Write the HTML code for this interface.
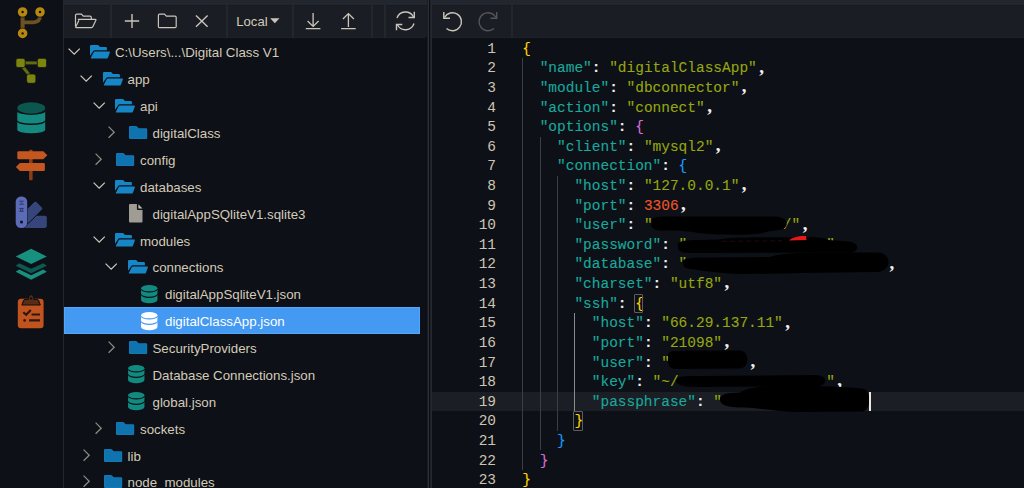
<!DOCTYPE html>
<html><head><meta charset="utf-8">
<style>
*{margin:0;padding:0;box-sizing:border-box}
html,body{width:1024px;height:488px;overflow:hidden;background:#0d1017;font-family:"Liberation Sans",sans-serif}
.abs{position:absolute}
#actb{left:63px;top:0;width:1px;height:488px;background:#23262c}
#strip{left:64px;top:0;width:960px;height:4.7px;background:#22262e}
#stripl{left:64px;top:4.7px;width:960px;height:1px;background:#181a20}
#tb1{left:64px;top:5.7px;width:363px;height:31.9px;background:#1a1d24;border-bottom:1px solid #1e2127}
#tb2{left:432px;top:5.7px;width:592px;height:31.9px;background:#1a1d24;border-bottom:1px solid #1e2127}
.sep{position:absolute;top:4.7px;width:1.5px;height:32.9px;background:#22262d}
#sashA{left:427px;top:0;width:2px;height:488px;background:linear-gradient(90deg,#1a1d23 0 50%,#2b2e34 50% 100%)}
#sash0{left:425px;top:37px;width:2px;height:451px;background:#0c0f15}
#sashB{left:429px;top:0;width:1px;height:488px;background:#0c0f14}
#sashC{left:430px;top:0;width:2px;height:488px;background:linear-gradient(90deg,#1f2228 0 50%,#25282e 50% 100%)}
.row{position:absolute;left:64px;width:356px;height:26.88px}
.row.sel{background:#4499f2;box-shadow:inset 0 0 0 1px #55a6f7}
.tt{position:absolute;font-size:13.3px;line-height:16px;white-space:nowrap}
.ln{position:absolute;padding-top:1.2px;left:432px;width:64px;text-align:right;font-family:"Liberation Mono",monospace;font-size:14.47px;line-height:19.61px;height:19.61px;color:#cdc5b3}
.cl{position:absolute;padding-top:1.2px;left:522.3px;font-family:"Liberation Mono",monospace;font-size:14.47px;line-height:19.61px;height:19.61px;white-space:pre;color:#e8e8e8;-webkit-text-stroke:0.1px currentColor}
.k{color:#19a99d}.s{color:#97a70f}.n{color:#f2562a}.p{color:#f0f0f0;font-weight:bold}
.cm{display:inline-block;width:8.682px;text-align:center;font-family:"Liberation Serif",serif;font-weight:bold;font-size:19px;line-height:0;-webkit-text-stroke:0;position:relative;left:0.5px;top:0.3px}
.b1{color:#ffd700}.b2{color:#da70d6}.b3{color:#179fff}
.bx{color:#ffd700}
.box{position:absolute;border:1px solid #5e5e5e;border-radius:1px}
#hl{left:432px;top:391.58px;width:592px;height:19.61px;background:#1b1e25}
.g{position:absolute;width:1px}
</style></head><body>
<div id="actb" class="abs"></div>
<div id="strip" class="abs"></div>
<div id="stripl" class="abs"></div>
<div id="tb1" class="abs"></div>
<div id="tb2" class="abs"></div>
<div class="sep" style="left:110px"></div>
<div class="sep" style="left:226px"></div>
<div class="sep" style="left:292px"></div>
<div class="sep" style="left:371px"></div>
<div class="sep" style="left:384px"></div>
<div class="sep" style="left:511px"></div>
<div id="sash0" class="abs"></div>
<div id="sashA" class="abs"></div>
<div id="sashB" class="abs"></div>
<div id="sashC" class="abs"></div>
<div id="hl" class="abs"></div>

<svg class="abs" style="left:0;top:0" width="63" height="340" viewBox="0 0 63 340">
 <!-- git branch -->
 <path d="M22.6 16 V30" stroke="#6b5220" stroke-width="4" fill="none"/>
 <path d="M40 16 Q40 22.3 33.5 22.3 H22.6" stroke="#6b5220" stroke-width="3.8" fill="none"/>
 <circle cx="22.6" cy="12" r="5.6" fill="#0d1017"/>
 <circle cx="40" cy="12" r="5.6" fill="#0d1017"/>
 <circle cx="22.6" cy="33.4" r="5.6" fill="#0d1017"/>
 <circle cx="22.6" cy="12" r="3" fill="none" stroke="#b8870f" stroke-width="3.6"/>
 <circle cx="40" cy="12" r="3" fill="none" stroke="#b8870f" stroke-width="3.6"/>
 <circle cx="22.6" cy="33.4" r="3" fill="none" stroke="#b8870f" stroke-width="3.6"/>
 <!-- graph -->
 <path d="M25 62.9 H37.5" stroke="#646a10" stroke-width="3"/>
 <path d="M22.5 66.5 L29 74.5" stroke="#646a10" stroke-width="3"/>
 <rect x="15.9" y="58.3" width="9.3" height="9.3" rx="2.2" fill="#7c860e" stroke="#0d1017" stroke-width="0.8"/>
 <rect x="37.3" y="58.3" width="9.3" height="9.3" rx="2.2" fill="#7c860e" stroke="#0d1017" stroke-width="0.8"/>
 <rect x="26.6" y="74" width="9.3" height="9.3" rx="2.2" fill="#7c860e" stroke="#0d1017" stroke-width="0.8"/>
 <!-- database -->
 <ellipse cx="31.25" cy="108" rx="13.95" ry="5.65" fill="#0c5650"/>
 <path d="M17.3,111.3 A13.95,3.6 0 0 0 45.2,111.3 V120 A13.95,3.5 0 0 1 17.3,120 Z" fill="#14897f"/>
 <path d="M17.3,121.6 A13.95,3.5 0 0 0 45.2,121.6 V129.8 A13.95,3.5 0 0 1 17.3,129.8 Z" fill="#14897f"/>
 <!-- signpost -->
 <rect x="29.1" y="149.8" width="3.5" height="30.5" rx="0.8" fill="#8a3e18"/>
 <path d="M17.3 152.5 Q17.3 151.3 18.5 151.3 H43.3 L47.3 155.2 L43.3 159.2 H18.5 Q17.3 159.2 17.3 158Z" fill="#c4561f"/>
 <path d="M44.9 164.3 Q44.9 163.1 43.7 163.1 H19.9 L15.9 167 L19.9 171 H43.7 Q44.9 171 44.9 169.8Z" fill="#c4561f"/>
 <!-- swatches -->
 <path d="M28.6 215.8 H45 Q46.8 215.8 46.8 217.6 V226.1 Q46.8 227.9 45 227.9 H24 Z" fill="#36457a"/>
 <path d="M26 210 L34 201.8 Q35.3 200.5 36.6 201.8 L42.1 207.2 Q43.4 208.5 42.1 209.8 L29 222.8 L26 224Z" fill="#36457a" stroke="#0d1017" stroke-width="1"/>
 <rect x="15.2" y="195.9" width="12.5" height="32.5" rx="5.6" fill="#0d1017"/>
 <rect x="15.7" y="196.4" width="11.5" height="31.5" rx="5.2" fill="#5b6bb8"/>
 <circle cx="21.5" cy="222" r="1.5" fill="#0d1017"/>
 <path d="M19.2 201.2 H23.8 M19.2 204.2 H23.8 M20.5 201.2 L22.5 204.2 M19.2 208.5 H23.8 M19.2 211.2 H23.8 M20.6 207.8 V212 M22.4 207.8 V212" stroke="#2e3a6a" stroke-width="0.9"/>
 <!-- layers -->
 <path d="M15.7 271.8 L19.2 269.6 L31.2 275.2 L43.3 269.6 L46.8 271.8 L31.2 279.8Z" fill="#16907f"/>
 <path d="M15.7 265.8 L19.2 263.3 L31.2 268.8 L43.3 263.3 L46.8 265.8 L31.2 273.2Z" fill="#0d5a53"/>
 <path d="M31.2 248.8 L46.8 256.5 L31.2 264.1 L15.7 256.5Z" fill="#16907f"/>
 <!-- clipboard -->
 <rect x="17.8" y="298.8" width="25.8" height="29.5" rx="3.2" fill="#c0531e"/>
 <path d="M21.9 305 L23.6 300.3 Q24 299.5 25 299.5 H28.2 Q28.6 294.6 31.1 294.6 Q33.6 294.6 34 299.5 H37.2 Q38.2 299.5 38.6 300.3 L40.3 305Z" fill="#0d1017" stroke="#0d1017" stroke-width="1"/>
 <path d="M22.7 304.4 L24.2 300.6 Q24.5 300 25.3 300 H28.7 Q29 295.2 31.1 295.2 Q33.2 295.2 33.5 300 H36.9 Q37.7 300 38 300.6 L39.5 304.4Z" fill="#5a2c16"/>
 <circle cx="31.1" cy="298.4" r="1.2" fill="#0d1017"/>
 <path d="M23.3 312.2 L26.2 314.8 L30.8 310" stroke="#2b1810" stroke-width="2.2" fill="none"/>
 <path d="M31.6 314.5 H40 M29.1 320.4 H40" stroke="#2b1810" stroke-width="2.2"/>
 <circle cx="24.6" cy="320.4" r="1.3" fill="#2b1810"/>
</svg>

<svg class="abs" style="left:64px;top:0" width="364" height="38" viewBox="64 0 364 38">
 <!-- open folder -->
 <path d="M75.5 26.5 V15.5 Q75.5 14.2 76.8 14.2 H81.5 L83.3 16.2 H90 Q91.3 16.2 91.3 17.5 V19.3" fill="none" stroke="#c9c5b9" stroke-width="1.2"/>
 <path d="M77.8 19.3 H95.2 Q96.3 19.3 95.9 20.3 L92.8 26.8 Q92.4 27.6 91.5 27.6 H76.3 Q75.4 27.6 75.8 26.8 L79 20.2" fill="none" stroke="#c9c5b9" stroke-width="1.2"/>
 <!-- plus -->
 <path d="M132 14 V28.1 M124.8 21 H139.2" stroke="#c9c5b9" stroke-width="1.4"/>
 <!-- folder -->
 <path d="M158.4 15.4 Q158.4 14.2 159.6 14.2 H164.5 L166.4 16.2 H175 Q176.2 16.2 176.2 17.4 V26.4 Q176.2 27.6 175 27.6 H159.6 Q158.4 27.6 158.4 26.4Z" fill="none" stroke="#c9c5b9" stroke-width="1.2"/>
 <!-- x -->
 <path d="M196 15.6 L207.6 26.8 M207.6 15.6 L196 26.8" stroke="#c9c5b9" stroke-width="1.4"/>
 <!-- triangle -->
 <path d="M270.2 18.2 H279.5 L274.85 23.2Z" fill="#c9c5b9"/>
 <!-- download -->
 <path d="M313.1 13 V26 M307.6 21 L313.1 26.4 L318.6 21 M305.8 28.6 H320.4" fill="none" stroke="#c9c5b9" stroke-width="1.3"/>
 <!-- upload -->
 <path d="M348.4 14 V27 M342.9 19 L348.4 13.6 L353.9 19 M341.1 28.6 H355.7" fill="none" stroke="#c9c5b9" stroke-width="1.3"/>
 <!-- refresh -->
 <path d="M397 18 A9 9 0 0 1 413.5 17" fill="none" stroke="#c9c5b9" stroke-width="1.4"/>
 <path d="M414 23.5 A9 9 0 0 1 397.5 25" fill="none" stroke="#c9c5b9" stroke-width="1.4"/>
 <path d="M408.5 17.5 H414.3 V11.8" fill="none" stroke="#c9c5b9" stroke-width="1.4"/>
 <path d="M402.3 24.5 H396.5 V30.2" fill="none" stroke="#c9c5b9" stroke-width="1.4"/>
</svg>
<div class="abs" style="left:236.3px;top:14.2px;font-size:13.1px;line-height:16px;color:#d4cbb8">Local</div>
<svg class="abs" style="left:432px;top:0" width="80" height="38" viewBox="432 0 80 38">
 <path d="M444.5 17.5 A9 9 0 1 1 446.5 28.5" fill="none" stroke="#c9c5b9" stroke-width="1.4"/>
 <path d="M443.8 12 V18.3 H450" fill="none" stroke="#c9c5b9" stroke-width="1.4"/>
 <path d="M496 17.5 A9 9 0 1 0 494 28.5" fill="none" stroke="#54555a" stroke-width="1.4"/>
 <path d="M496.7 12 V18.3 H490.5" fill="none" stroke="#54555a" stroke-width="1.4"/>
</svg>
<div class="row" style="top:38.20px"></div>
<svg class="abs" style="left:67.5px;top:48.0px" width="13" height="8" viewBox="0 0 13 8">
<path d="M0.6 0.6 L6.2 6.2 L11.8 0.6" fill="none" stroke="#cfc9bc" stroke-width="1.25"/></svg>
<svg class="abs" style="left:90.0px;top:45.300000000000004px" width="21" height="15" viewBox="0 0 21 15">
<path d="M0 1.1 Q0 0 1.1 0 H7.6 Q8.3 0 8.8 0.6 L9.9 2 H15.9 Q16.9 2 16.9 3 V5.2 H4.7 Q3.8 5.2 3.3 6 L0 10.8 Z" fill="#1786c6"/>
<path d="M4.6 6.6 H19.2 Q20.2 6.6 19.9 7.5 L17.9 12.7 Q17.6 13.6 16.6 13.6 H1.6 Q0.6 13.6 0.9 12.7 L3.6 7.4 Q4 6.6 4.6 6.6Z" fill="#1786c6"/>
</svg>
<div class="tt" style="left:115.0px;top:45.40px;color:#d4cbb8">C:\Users\...\Digital Class V1</div>
<div class="row" style="top:65.08px"></div>
<svg class="abs" style="left:80.0px;top:74.88000000000001px" width="13" height="8" viewBox="0 0 13 8">
<path d="M0.6 0.6 L6.2 6.2 L11.8 0.6" fill="none" stroke="#cfc9bc" stroke-width="1.25"/></svg>
<svg class="abs" style="left:102.5px;top:72.18px" width="21" height="15" viewBox="0 0 21 15">
<path d="M0 1.1 Q0 0 1.1 0 H7.6 Q8.3 0 8.8 0.6 L9.9 2 H15.9 Q16.9 2 16.9 3 V5.2 H4.7 Q3.8 5.2 3.3 6 L0 10.8 Z" fill="#1786c6"/>
<path d="M4.6 6.6 H19.2 Q20.2 6.6 19.9 7.5 L17.9 12.7 Q17.6 13.6 16.6 13.6 H1.6 Q0.6 13.6 0.9 12.7 L3.6 7.4 Q4 6.6 4.6 6.6Z" fill="#1786c6"/>
</svg>
<div class="tt" style="left:127.5px;top:72.28px;color:#d4cbb8">app</div>
<div class="row" style="top:91.96px"></div>
<svg class="abs" style="left:92.5px;top:101.76000000000002px" width="13" height="8" viewBox="0 0 13 8">
<path d="M0.6 0.6 L6.2 6.2 L11.8 0.6" fill="none" stroke="#cfc9bc" stroke-width="1.25"/></svg>
<svg class="abs" style="left:115.0px;top:99.06000000000002px" width="21" height="15" viewBox="0 0 21 15">
<path d="M0 1.1 Q0 0 1.1 0 H7.6 Q8.3 0 8.8 0.6 L9.9 2 H15.9 Q16.9 2 16.9 3 V5.2 H4.7 Q3.8 5.2 3.3 6 L0 10.8 Z" fill="#1786c6"/>
<path d="M4.6 6.6 H19.2 Q20.2 6.6 19.9 7.5 L17.9 12.7 Q17.6 13.6 16.6 13.6 H1.6 Q0.6 13.6 0.9 12.7 L3.6 7.4 Q4 6.6 4.6 6.6Z" fill="#1786c6"/>
</svg>
<div class="tt" style="left:140.0px;top:99.16px;color:#d4cbb8">api</div>
<div class="row" style="top:118.84px"></div>
<svg class="abs" style="left:107.5px;top:125.94000000000001px" width="8" height="13" viewBox="0 0 8 13">
<path d="M0.6 0.6 L6.2 6.2 L0.6 11.8" fill="none" stroke="#8f8b82" stroke-width="1.25"/></svg>
<svg class="abs" style="left:128.7px;top:126.04px" width="19" height="14" viewBox="0 0 19 14">
<path d="M0 1.1 Q0 0 1.1 0 H6.9 Q7.5 0 8 0.5 L9.6 2.2 H17.1 Q18.2 2.2 18.2 3.3 V11.9 Q18.2 13 17.1 13 H1.1 Q0 13 0 11.9 Z" fill="#1279b6"/>
<path d="M1 1.6 Q1 1 1.6 1 H6.7 L9.2 3.2 H16.6 Q17.2 3.2 17.2 3.8 V11.4 Q17.2 12 16.6 12 H1.6 Q1 12 1 11.4Z" fill="#0b6fa8" opacity="0.6"/>
</svg>
<div class="tt" style="left:152.5px;top:126.04px;color:#d4cbb8">digitalClass</div>
<div class="row" style="top:145.72px"></div>
<svg class="abs" style="left:95.0px;top:152.82px" width="8" height="13" viewBox="0 0 8 13">
<path d="M0.6 0.6 L6.2 6.2 L0.6 11.8" fill="none" stroke="#8f8b82" stroke-width="1.25"/></svg>
<svg class="abs" style="left:116.2px;top:152.92000000000002px" width="19" height="14" viewBox="0 0 19 14">
<path d="M0 1.1 Q0 0 1.1 0 H6.9 Q7.5 0 8 0.5 L9.6 2.2 H17.1 Q18.2 2.2 18.2 3.3 V11.9 Q18.2 13 17.1 13 H1.1 Q0 13 0 11.9 Z" fill="#1279b6"/>
<path d="M1 1.6 Q1 1 1.6 1 H6.7 L9.2 3.2 H16.6 Q17.2 3.2 17.2 3.8 V11.4 Q17.2 12 16.6 12 H1.6 Q1 12 1 11.4Z" fill="#0b6fa8" opacity="0.6"/>
</svg>
<div class="tt" style="left:140.0px;top:152.92px;color:#d4cbb8">config</div>
<div class="row" style="top:172.60px"></div>
<svg class="abs" style="left:92.5px;top:182.40000000000003px" width="13" height="8" viewBox="0 0 13 8">
<path d="M0.6 0.6 L6.2 6.2 L11.8 0.6" fill="none" stroke="#cfc9bc" stroke-width="1.25"/></svg>
<svg class="abs" style="left:115.0px;top:179.70000000000002px" width="21" height="15" viewBox="0 0 21 15">
<path d="M0 1.1 Q0 0 1.1 0 H7.6 Q8.3 0 8.8 0.6 L9.9 2 H15.9 Q16.9 2 16.9 3 V5.2 H4.7 Q3.8 5.2 3.3 6 L0 10.8 Z" fill="#1786c6"/>
<path d="M4.6 6.6 H19.2 Q20.2 6.6 19.9 7.5 L17.9 12.7 Q17.6 13.6 16.6 13.6 H1.6 Q0.6 13.6 0.9 12.7 L3.6 7.4 Q4 6.6 4.6 6.6Z" fill="#1786c6"/>
</svg>
<div class="tt" style="left:140.0px;top:179.80px;color:#d4cbb8">databases</div>
<div class="row" style="top:199.48px"></div>
<svg class="abs" style="left:129.2px;top:204.28000000000003px" width="14" height="19" viewBox="0 0 14 19">
<path d="M0 1 Q0 0 1 0 H7.9 V5 Q7.9 6 8.9 6 H13.5 V17.4 Q13.5 18.4 12.5 18.4 H1 Q0 18.4 0 17.4Z" fill="#a09c94"/>
<path d="M9.4 0.3 L13.5 4.5 H9.4Z" fill="#bdb9b1"/>
</svg>
<div class="tt" style="left:152.5px;top:206.68px;color:#d4cbb8">digitalAppSQliteV1.sqlite3</div>
<div class="row" style="top:226.36px"></div>
<svg class="abs" style="left:92.5px;top:236.16000000000003px" width="13" height="8" viewBox="0 0 13 8">
<path d="M0.6 0.6 L6.2 6.2 L11.8 0.6" fill="none" stroke="#cfc9bc" stroke-width="1.25"/></svg>
<svg class="abs" style="left:115.0px;top:233.46px" width="21" height="15" viewBox="0 0 21 15">
<path d="M0 1.1 Q0 0 1.1 0 H7.6 Q8.3 0 8.8 0.6 L9.9 2 H15.9 Q16.9 2 16.9 3 V5.2 H4.7 Q3.8 5.2 3.3 6 L0 10.8 Z" fill="#1786c6"/>
<path d="M4.6 6.6 H19.2 Q20.2 6.6 19.9 7.5 L17.9 12.7 Q17.6 13.6 16.6 13.6 H1.6 Q0.6 13.6 0.9 12.7 L3.6 7.4 Q4 6.6 4.6 6.6Z" fill="#1786c6"/>
</svg>
<div class="tt" style="left:140.0px;top:233.56px;color:#d4cbb8">modules</div>
<div class="row" style="top:253.24px"></div>
<svg class="abs" style="left:105.0px;top:263.03999999999996px" width="13" height="8" viewBox="0 0 13 8">
<path d="M0.6 0.6 L6.2 6.2 L11.8 0.6" fill="none" stroke="#cfc9bc" stroke-width="1.25"/></svg>
<svg class="abs" style="left:127.5px;top:260.34px" width="21" height="15" viewBox="0 0 21 15">
<path d="M0 1.1 Q0 0 1.1 0 H7.6 Q8.3 0 8.8 0.6 L9.9 2 H15.9 Q16.9 2 16.9 3 V5.2 H4.7 Q3.8 5.2 3.3 6 L0 10.8 Z" fill="#1786c6"/>
<path d="M4.6 6.6 H19.2 Q20.2 6.6 19.9 7.5 L17.9 12.7 Q17.6 13.6 16.6 13.6 H1.6 Q0.6 13.6 0.9 12.7 L3.6 7.4 Q4 6.6 4.6 6.6Z" fill="#1786c6"/>
</svg>
<div class="tt" style="left:152.5px;top:260.44px;color:#d4cbb8">connections</div>
<div class="row" style="top:280.12px"></div>
<svg class="abs" style="left:140.9px;top:284.82px" width="17" height="19" viewBox="0 0 17 19">
<ellipse cx="8.25" cy="3.2" rx="8.2" ry="3.15" fill="#118a80"/>
<path d="M0.05 4.4 A8.2 3.1 0 0 0 16.45 4.4 V8.6 A8.2 3.1 0 0 1 0.05 8.6 Z" fill="#118a80"/>
<path d="M0.05 9.8 A8.2 3.1 0 0 0 16.45 9.8 V15.1 A8.2 3.1 0 0 1 0.05 15.1 Z" fill="#118a80"/>
</svg>
<div class="tt" style="left:165.0px;top:287.32px;color:#d4cbb8">digitalAppSqliteV1.json</div>
<div class="row sel" style="top:307.00px"></div>
<svg class="abs" style="left:140.9px;top:311.7px" width="17" height="19" viewBox="0 0 17 19">
<ellipse cx="8.25" cy="3.2" rx="8.2" ry="3.15" fill="#ffffff"/>
<path d="M0.05 4.4 A8.2 3.1 0 0 0 16.45 4.4 V8.6 A8.2 3.1 0 0 1 0.05 8.6 Z" fill="#ffffff"/>
<path d="M0.05 9.8 A8.2 3.1 0 0 0 16.45 9.8 V15.1 A8.2 3.1 0 0 1 0.05 15.1 Z" fill="#ffffff"/>
</svg>
<div class="tt" style="left:165.0px;top:314.20px;color:#ffffff">digitalClassApp.json</div>
<div class="row" style="top:333.88px"></div>
<svg class="abs" style="left:107.5px;top:340.97999999999996px" width="8" height="13" viewBox="0 0 8 13">
<path d="M0.6 0.6 L6.2 6.2 L0.6 11.8" fill="none" stroke="#8f8b82" stroke-width="1.25"/></svg>
<svg class="abs" style="left:128.7px;top:341.08px" width="19" height="14" viewBox="0 0 19 14">
<path d="M0 1.1 Q0 0 1.1 0 H6.9 Q7.5 0 8 0.5 L9.6 2.2 H17.1 Q18.2 2.2 18.2 3.3 V11.9 Q18.2 13 17.1 13 H1.1 Q0 13 0 11.9 Z" fill="#1279b6"/>
<path d="M1 1.6 Q1 1 1.6 1 H6.7 L9.2 3.2 H16.6 Q17.2 3.2 17.2 3.8 V11.4 Q17.2 12 16.6 12 H1.6 Q1 12 1 11.4Z" fill="#0b6fa8" opacity="0.6"/>
</svg>
<div class="tt" style="left:152.5px;top:341.08px;color:#d4cbb8">SecurityProviders</div>
<div class="row" style="top:360.76px"></div>
<svg class="abs" style="left:128.4px;top:365.46px" width="17" height="19" viewBox="0 0 17 19">
<ellipse cx="8.25" cy="3.2" rx="8.2" ry="3.15" fill="#118a80"/>
<path d="M0.05 4.4 A8.2 3.1 0 0 0 16.45 4.4 V8.6 A8.2 3.1 0 0 1 0.05 8.6 Z" fill="#118a80"/>
<path d="M0.05 9.8 A8.2 3.1 0 0 0 16.45 9.8 V15.1 A8.2 3.1 0 0 1 0.05 15.1 Z" fill="#118a80"/>
</svg>
<div class="tt" style="left:152.5px;top:367.96px;color:#d4cbb8">Database Connections.json</div>
<div class="row" style="top:387.64px"></div>
<svg class="abs" style="left:128.4px;top:392.34px" width="17" height="19" viewBox="0 0 17 19">
<ellipse cx="8.25" cy="3.2" rx="8.2" ry="3.15" fill="#118a80"/>
<path d="M0.05 4.4 A8.2 3.1 0 0 0 16.45 4.4 V8.6 A8.2 3.1 0 0 1 0.05 8.6 Z" fill="#118a80"/>
<path d="M0.05 9.8 A8.2 3.1 0 0 0 16.45 9.8 V15.1 A8.2 3.1 0 0 1 0.05 15.1 Z" fill="#118a80"/>
</svg>
<div class="tt" style="left:152.5px;top:394.84px;color:#d4cbb8">global.json</div>
<div class="row" style="top:414.52px"></div>
<svg class="abs" style="left:95.0px;top:421.61999999999995px" width="8" height="13" viewBox="0 0 8 13">
<path d="M0.6 0.6 L6.2 6.2 L0.6 11.8" fill="none" stroke="#8f8b82" stroke-width="1.25"/></svg>
<svg class="abs" style="left:116.2px;top:421.71999999999997px" width="19" height="14" viewBox="0 0 19 14">
<path d="M0 1.1 Q0 0 1.1 0 H6.9 Q7.5 0 8 0.5 L9.6 2.2 H17.1 Q18.2 2.2 18.2 3.3 V11.9 Q18.2 13 17.1 13 H1.1 Q0 13 0 11.9 Z" fill="#1279b6"/>
<path d="M1 1.6 Q1 1 1.6 1 H6.7 L9.2 3.2 H16.6 Q17.2 3.2 17.2 3.8 V11.4 Q17.2 12 16.6 12 H1.6 Q1 12 1 11.4Z" fill="#0b6fa8" opacity="0.6"/>
</svg>
<div class="tt" style="left:140.0px;top:421.72px;color:#d4cbb8">sockets</div>
<div class="row" style="top:441.40px"></div>
<svg class="abs" style="left:82.5px;top:448.49999999999994px" width="8" height="13" viewBox="0 0 8 13">
<path d="M0.6 0.6 L6.2 6.2 L0.6 11.8" fill="none" stroke="#8f8b82" stroke-width="1.25"/></svg>
<svg class="abs" style="left:103.7px;top:448.59999999999997px" width="19" height="14" viewBox="0 0 19 14">
<path d="M0 1.1 Q0 0 1.1 0 H6.9 Q7.5 0 8 0.5 L9.6 2.2 H17.1 Q18.2 2.2 18.2 3.3 V11.9 Q18.2 13 17.1 13 H1.1 Q0 13 0 11.9 Z" fill="#1279b6"/>
<path d="M1 1.6 Q1 1 1.6 1 H6.7 L9.2 3.2 H16.6 Q17.2 3.2 17.2 3.8 V11.4 Q17.2 12 16.6 12 H1.6 Q1 12 1 11.4Z" fill="#0b6fa8" opacity="0.6"/>
</svg>
<div class="tt" style="left:127.5px;top:448.60px;color:#d4cbb8">lib</div>
<div class="row" style="top:468.28px"></div>
<svg class="abs" style="left:82.5px;top:475.37999999999994px" width="8" height="13" viewBox="0 0 8 13">
<path d="M0.6 0.6 L6.2 6.2 L0.6 11.8" fill="none" stroke="#8f8b82" stroke-width="1.25"/></svg>
<svg class="abs" style="left:103.7px;top:475.47999999999996px" width="19" height="14" viewBox="0 0 19 14">
<path d="M0 1.1 Q0 0 1.1 0 H6.9 Q7.5 0 8 0.5 L9.6 2.2 H17.1 Q18.2 2.2 18.2 3.3 V11.9 Q18.2 13 17.1 13 H1.1 Q0 13 0 11.9 Z" fill="#1279b6"/>
<path d="M1 1.6 Q1 1 1.6 1 H6.7 L9.2 3.2 H16.6 Q17.2 3.2 17.2 3.8 V11.4 Q17.2 12 16.6 12 H1.6 Q1 12 1 11.4Z" fill="#0b6fa8" opacity="0.6"/>
</svg>
<div class="tt" style="left:127.5px;top:475.48px;color:#d4cbb8">node_modules</div>
<div class="ln" style="top:38.60px">1</div>
<div class="cl" style="top:38.60px"><span class="b1">{</span></div>
<div class="ln" style="top:58.21px">2</div>
<div class="cl" style="top:58.21px">  <span class="k">&quot;name&quot;</span><span class="p">: </span><span class="s">&quot;digitalClassApp&quot;</span><span class="p"><span class="cm">,</span></span></div>
<div class="ln" style="top:77.82px">3</div>
<div class="cl" style="top:77.82px">  <span class="k">&quot;module&quot;</span><span class="p">: </span><span class="s">&quot;dbconnector&quot;</span><span class="p"><span class="cm">,</span></span></div>
<div class="ln" style="top:97.43px">4</div>
<div class="cl" style="top:97.43px">  <span class="k">&quot;action&quot;</span><span class="p">: </span><span class="s">&quot;connect&quot;</span><span class="p"><span class="cm">,</span></span></div>
<div class="ln" style="top:117.04px">5</div>
<div class="cl" style="top:117.04px">  <span class="k">&quot;options&quot;</span><span class="p">: </span><span class="b2">{</span></div>
<div class="ln" style="top:136.65px">6</div>
<div class="cl" style="top:136.65px">    <span class="k">&quot;client&quot;</span><span class="p">: </span><span class="s">&quot;mysql2&quot;</span><span class="p"><span class="cm">,</span></span></div>
<div class="ln" style="top:156.26px">7</div>
<div class="cl" style="top:156.26px">    <span class="k">&quot;connection&quot;</span><span class="p">: </span><span class="b3">{</span></div>
<div class="ln" style="top:175.87px">8</div>
<div class="cl" style="top:175.87px">      <span class="k">&quot;host&quot;</span><span class="p">: </span><span class="s">&quot;127.0.0.1&quot;</span><span class="p"><span class="cm">,</span></span></div>
<div class="ln" style="top:195.48px">9</div>
<div class="cl" style="top:195.48px">      <span class="k">&quot;port&quot;</span><span class="p">: </span><span class="n">3306</span><span class="p"><span class="cm">,</span></span></div>
<div class="ln" style="top:215.09px">10</div>
<div class="cl" style="top:215.09px">      <span class="k">&quot;user&quot;</span><span class="p">: </span><span class="s">&quot;               /&quot;</span><span class="p"><span class="cm">,</span></span></div>
<div class="ln" style="top:234.70px">11</div>
<div class="cl" style="top:234.70px">      <span class="k">&quot;password&quot;</span><span class="p">: </span><span class="s">&quot;                &quot;</span><span class="p"><span class="cm">,</span></span></div>
<div class="ln" style="top:254.31px">12</div>
<div class="cl" style="top:254.31px">      <span class="k">&quot;database&quot;</span><span class="p">: </span><span class="s">&quot;                      &quot;</span><span class="p"><span class="cm">,</span></span></div>
<div class="ln" style="top:273.92px">13</div>
<div class="cl" style="top:273.92px">      <span class="k">&quot;charset&quot;</span><span class="p">: </span><span class="s">&quot;utf8&quot;</span><span class="p"><span class="cm">,</span></span></div>
<div class="ln" style="top:293.53px">14</div>
<div class="cl" style="top:293.53px">      <span class="k">&quot;ssh&quot;</span><span class="p">: </span><span class="bx">{</span></div>
<div class="ln" style="top:313.14px">15</div>
<div class="cl" style="top:313.14px">        <span class="k">&quot;host&quot;</span><span class="p">: </span><span class="s">&quot;66.29.137.11&quot;</span><span class="p"><span class="cm">,</span></span></div>
<div class="ln" style="top:332.75px">16</div>
<div class="cl" style="top:332.75px">        <span class="k">&quot;port&quot;</span><span class="p">: </span><span class="s">&quot;21098&quot;</span><span class="p"><span class="cm">,</span></span></div>
<div class="ln" style="top:352.36px">17</div>
<div class="cl" style="top:352.36px">        <span class="k">&quot;user&quot;</span><span class="p">: </span><span class="s">&quot;        &quot;</span><span class="p"><span class="cm">,</span></span></div>
<div class="ln" style="top:371.97px">18</div>
<div class="cl" style="top:371.97px">        <span class="k">&quot;key&quot;</span><span class="p">: </span><span class="s">&quot;~/                 &quot;</span><span class="p"><span class="cm">,</span></span></div>
<div class="ln" style="top:391.58px">19</div>
<div class="cl" style="top:391.58px">        <span class="k">&quot;passphrase&quot;</span><span class="p">: </span><span class="s">&quot;                &quot;</span></div>
<div class="ln" style="top:411.19px">20</div>
<div class="cl" style="top:411.19px">      <span class="bx">}</span></div>
<div class="ln" style="top:430.80px">21</div>
<div class="cl" style="top:430.80px">    <span class="b3">}</span></div>
<div class="ln" style="top:450.41px">22</div>
<div class="cl" style="top:450.41px">  <span class="b2">}</span></div>
<div class="ln" style="top:470.02px">23</div>
<div class="cl" style="top:470.02px"><span class="b1">}</span></div>
<div class="g" style="left:522.3px;top:58.21px;height:411.81px;background:#3b3e44"></div>
<div class="g" style="left:539.7px;top:136.65px;height:313.76px;background:#3b3e44"></div>
<div class="g" style="left:557.0px;top:175.87px;height:254.93px;background:#3b3e44"></div>
<div class="g" style="left:574.4px;top:313.14px;height:98.05px;background:#8a8a8a"></div>
<div class="box" style="left:634.1px;top:293.53px;width:9.28px;height:19.61px"></div>
<div class="box" style="left:573.3px;top:411.19px;width:9.28px;height:19.61px"></div>

<svg class="abs" style="left:0;top:0" width="1024" height="488" viewBox="0 0 1024 488">
 <path d="M652,222 C650,216 660,216.5 680,216.5 L775,216.5 C790,216.5 790,230 778,230 L770,231 C760,234.5 745,235 720,234.5 C700,234 690,231 675,230.5 L660,230.5 C652,230 650,226 652,222 Z" fill="#000"/>
 <path d="M678,247 C676,241 684,240 700,240 L718,239.5 C730,237 760,237 800,237.5 C812,236.5 822,237 828,240 L848,241.5 C860,242.5 860,252 850,252.5 L690,253 C680,253 678,250 678,247Z" fill="#000"/>
 <path d="M789,240.5 C792,237 800,235.5 806,236 L806.5,240 Z" fill="#e81818"/>
 <path d="M722,241.3 L782,240.8" stroke="#3a0c0c" stroke-width="0.7" stroke-dasharray="5 3"/>
 <path d="M683,263 C681,258 690,257.5 710,257.5 L770,257 C780,253 800,252.5 850,252.5 L878,252.5 C892,253 892,271 878,272 L800,273 C780,273.5 770,274 740,274 C720,273.5 700,270 690,269 C684,268 683,266 683,263Z" fill="#000"/>
 <path d="M668,356 C667,351 672,351 690,350.5 L740,350.5 C750,351 750,368 740,368.5 L675,369 C668,368.5 668,363 668,356Z" fill="#000"/>
 <path d="M676,381 C675,376 685,376 700,376 L815,375 C828,375 828,385 818,386 L700,387 C683,387 677,385 676,381Z" fill="#000"/>
 <path d="M720,400 C719,393.5 728,393 740,392.5 C750,386 770,385 800,385.5 L830,386.5 C845,387 855,388 862,388.5 C872,389 872,411 862,411.5 L800,412 C780,412 765,408.5 745,407.5 C726,407.5 721,405 720,400Z" fill="#000"/>
</svg>
<div class="abs" style="left:869px;top:391.6px;width:2px;height:19.4px;background:#ece8dc"></div>
</body></html>
